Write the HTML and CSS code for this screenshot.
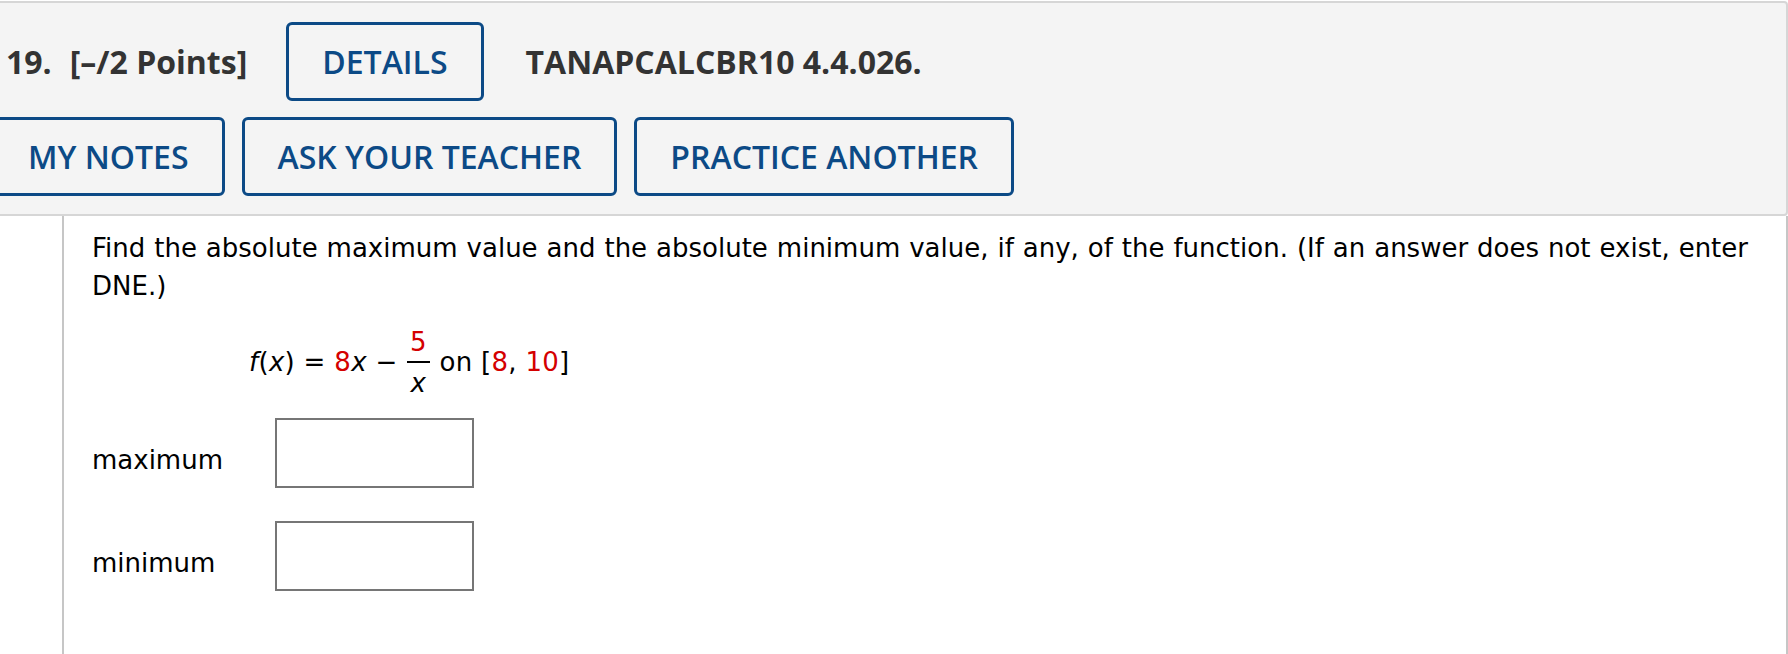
FILE: index.html
```html
<!DOCTYPE html>
<html>
<head>
<meta charset="utf-8">
<link rel="stylesheet" href="styles.css">
</head>
<body>
<div class="question">
  <div class="qhead">
    <div class="row row-top">
      <span class="qnum">19.</span>
      <span class="pts">[–/2 Points]</span>
      <button class="btn">DETAILS</button>
      <span class="code">TANAPCALCBR10 4.4.026.</span>
    </div>
    <div class="row row-actions">
      <button class="btn">MY NOTES</button>
      <button class="btn">ASK YOUR TEACHER</button>
      <button class="btn">PRACTICE ANOTHER</button>
    </div>
  </div>
  <div class="qbody">
    <p class="prompt">Find the absolute maximum value and the absolute minimum value, if any, of the function. (If an answer does not exist, enter DNE.)</p>
    <div class="formula">
      <i>f</i>(<i>x</i>) = <span class="red">8</span><i>x</i> − <span class="frac"><span class="num red">5</span><span class="den"><i>x</i></span></span> on [<span class="red">8</span>, <span class="red">10</span>]
    </div>
    <div class="answers">
      <label class="lbl">maximum</label>
      <span class="box"></span>
      <label class="lbl">minimum</label>
      <span class="box"></span>
    </div>
  </div>
</div>
</body>
</html>
```

FILE: styles.css
```css
html, body {
  margin: 0;
  padding: 0;
  background: #ffffff;
}
body {
  padding-top: 1px;
  height: 653px;
  overflow: hidden;
  font-family: "DejaVu Sans", Verdana, sans-serif;
  color: #000;
}
.question {
  display: flex;
  flex-direction: column;
  height: 100%;
}
.qhead {
  margin-left: -20px;
  background: #f4f4f4;
  border: 2px solid #d6d6d6;
  border-radius: 0 4px 4px 0;
  padding: 19px 0 18px 10px;
  font-family: "Open Sans", "Liberation Sans", sans-serif;
}
.row {
  display: flex;
  align-items: center;
}
.row-top {
  padding-left: 14px;
  gap: 42px;
  margin-bottom: 16px;
}
.row-actions {
  gap: 17px;
}
.qnum, .pts, .code {
  font-size: 32px;
  font-weight: 700;
  color: #333333;
}
.qnum {
  margin-right: -24px;
}
.pts {
  margin-right: -3px;
}
.btn {
  font-family: "Open Sans", "Liberation Sans", sans-serif;
  font-size: 32px;
  font-weight: 600;
  color: #0c4a86;
  background: #f4f4f4;
  border: 3px solid #0c4a86;
  border-radius: 6px;
  padding: 14px 33px;
  line-height: 45px;
  margin: 0;
}
.qbody {
  flex: 1;
  margin-left: 62px;
  border-left: 2px solid #c6c6c6;
  border-right: 2px solid #c6c6c6;
  padding: 13px 0 0 28px;
  font-size: 26px;
}
.prompt {
  margin: 0;
  line-height: 38px;
  word-spacing: 0.7px;
}
.formula {
  margin-top: 18px;
  padding-left: 157px;
  line-height: 30px;
  letter-spacing: 0.3px;
}
.red {
  color: #d40000;
}
.frac {
  display: inline-flex;
  flex-direction: column;
  align-items: center;
  vertical-align: middle;
  margin: 0 1px;
}
.num {
  line-height: 38px;
  padding: 0 3px;
  border-bottom: 2px solid #000;
  align-self: stretch;
  text-align: center;
}
.den {
  line-height: 40px;
}
.answers {
  display: grid;
  grid-template-columns: 183px 199px;
  row-gap: 33px;
  align-items: center;
  margin-top: 15px;
}
.lbl {
  font-size: 26px;
  padding-top: 14px;
}
.box {
  box-sizing: border-box;
  height: 70px;
  border: 2px solid #767676;
  background: #fff;
}
```
